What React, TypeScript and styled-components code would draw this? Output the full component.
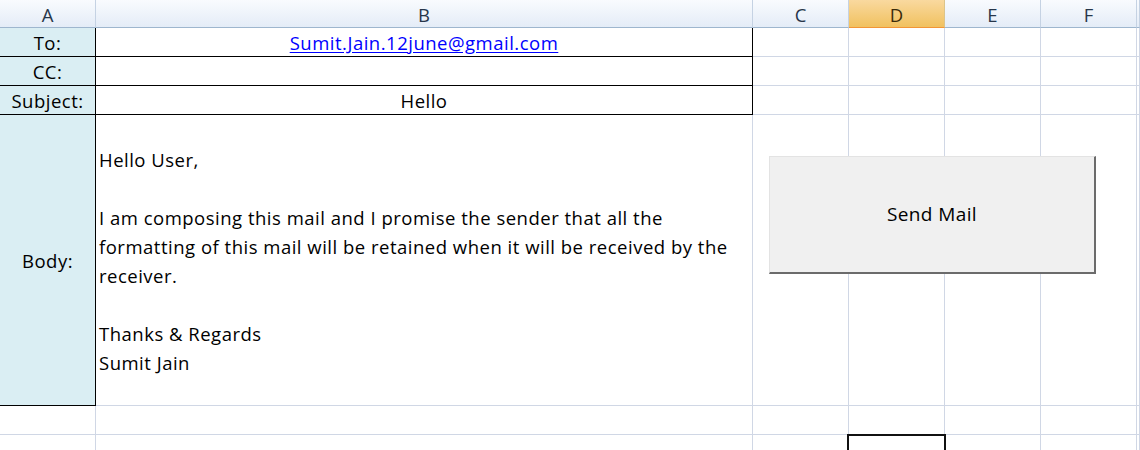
import React from "react";
import styled, { createGlobalStyle, css } from "styled-components";

const GlobalStyle = createGlobalStyle`
  html, body {
    margin: 0;
    padding: 0;
    background: #ffffff;
    overflow: hidden;
  }
  body {
    font-family: "Open Sans", "Noto Sans", sans-serif;
  }
`;

const GRID = "#d0d7e5";
const EDGE = "#000000";

const Sheet = styled.div`
  position: relative;
  display: grid;
  grid-template-columns: 96px 657px 96px 96px 96px 96px 1fr;
  grid-template-rows: 28px 29px 29px 29px 291px 29px 29px;
  width: 1140px;
  height: 450px;
  overflow: hidden;
  background: #ffffff;
`;

const ColumnHeader = styled.div<{ $active?: boolean }>`
  box-sizing: border-box;
  display: flex;
  align-items: center;
  justify-content: center;
  padding-top: 1px;
  font-size: 18.5px;
  color: #27364a;
  border-right: 1px solid #c5d2e3;
  border-bottom: 1px solid #9eb6ce;
  background: linear-gradient(#f9fbfe, #e4ecf7);
  ${({ $active }) =>
    $active &&
    css`
      color: #3a2a0a;
      background: linear-gradient(#f9d99f, #f1c15f);
      border-bottom-color: #f29536;
      border-right-color: #dcc48a;
    `}
`;

type CellProps = {
  $label?: boolean;
  $edgeRight?: boolean;
  $edgeBottom?: boolean;
  $align?: "center" | "left";
  $valign?: "center" | "top";
};

const Cell = styled.div<CellProps>`
  box-sizing: border-box;
  display: flex;
  justify-content: ${({ $align }) => ($align === "left" ? "flex-start" : "center")};
  align-items: ${({ $valign }) => ($valign === "top" ? "flex-start" : "center")};
  font-size: 18.5px;
  letter-spacing: 0.5px;
  color: #000000;
  background: ${({ $label }) => ($label ? "#daeef3" : "#ffffff")};
  border-right: 1px solid ${({ $edgeRight }) => ($edgeRight ? EDGE : GRID)};
  border-bottom: 1px solid ${({ $edgeBottom }) => ($edgeBottom ? EDGE : GRID)};
  white-space: nowrap;
`;

const ActiveCell = styled(Cell)`
  position: relative;
  &::after {
    content: "";
    position: absolute;
    left: -2px;
    top: -1px;
    right: -2px;
    bottom: -4px;
    border: 2px solid #111111;
  }
`;

const MailLink = styled.a`
  color: #0000ff;
  text-decoration: underline;
  text-underline-offset: 2px;
`;

const BodyText = styled.div`
  padding: 30px 0 0 3px;
  line-height: 29px;
  white-space: pre;
`;

const SendButton = styled.button`
  position: absolute;
  left: 769px;
  top: 156px;
  width: 327px;
  height: 118px;
  box-sizing: border-box;
  background: #f0f0f0;
  border: none;
  border-top: 1px solid #e3e3e3;
  border-left: 1px solid #e3e3e3;
  border-right: 2px solid #6b6b6b;
  border-bottom: 2px solid #6b6b6b;
  font-family: "Open Sans", "Noto Sans", sans-serif;
  font-size: 19px;
  letter-spacing: 0.4px;
  color: #000000;
  padding: 0 0 2px 0;
  cursor: pointer;
`;

const columns = ["A", "B", "C", "D", "E", "F", ""];
const spareColumns = 5;

const body = `Hello User,

I am composing this mail and I promise the sender that all the
formatting of this mail will be retained when it will be received by the
receiver.

Thanks & Regards
Sumit Jain`;

const fields = [
  {
    label: "To:",
    value: <MailLink href="#">Sumit.Jain.12june@gmail.com</MailLink>,
  },
  { label: "CC:", value: null },
  { label: "Subject:", value: "Hello" },
];

const Spare = ({ row }: { row: string }) => (
  <>
    {Array.from({ length: spareColumns }, (_, i) => (
      <Cell key={`${row}-${i}`} />
    ))}
  </>
);

const App = () => {
  return (
    <>
      <GlobalStyle />
      <Sheet>
        {columns.map((col, i) => (
          <ColumnHeader key={i} $active={col === "D"}>
            {col}
          </ColumnHeader>
        ))}

        {fields.map((field) => (
          <React.Fragment key={field.label}>
            <Cell $label $edgeRight $edgeBottom>
              {field.label}
            </Cell>
            <Cell $edgeRight $edgeBottom>
              {field.value}
            </Cell>
            <Spare row={field.label} />
          </React.Fragment>
        ))}

        <Cell $label $edgeRight $edgeBottom>
          Body:
        </Cell>
        <Cell $align="left" $valign="top">
          <BodyText>{body}</BodyText>
        </Cell>
        <Spare row="body" />

        {Array.from({ length: 7 }, (_, i) => (
          <Cell key={`r5-${i}`} />
        ))}

        <Cell />
        <Cell />
        <Cell />
        <ActiveCell />
        <Cell />
        <Cell />
        <Cell />

        <SendButton>Send Mail</SendButton>
      </Sheet>
    </>
  );
};

export default App;
